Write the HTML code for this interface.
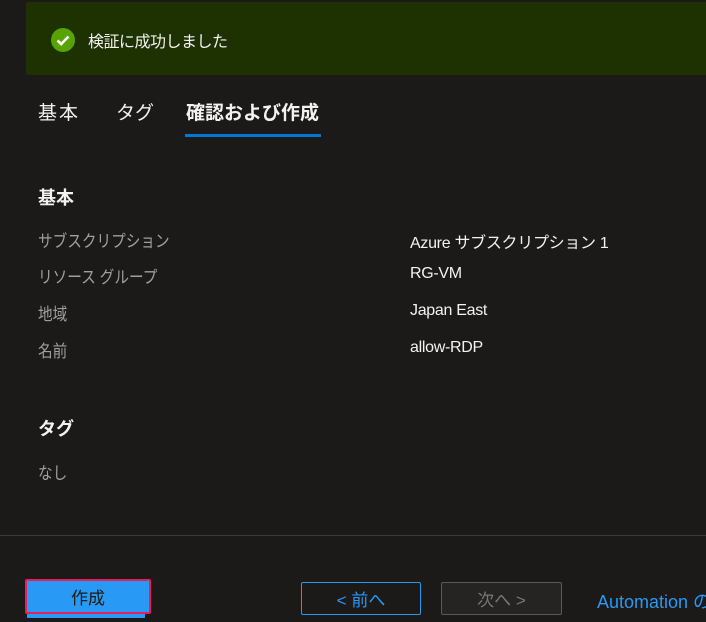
<!DOCTYPE html>
<html><head><meta charset="utf-8"><style>
body{margin:0;width:706px;height:622px;background:#1b1a19;font-family:"Liberation Sans","Noto Sans CJK JP",sans-serif;position:relative;overflow:hidden;color:#f3f2f1}
.a{position:absolute;white-space:nowrap}
.banner{left:26px;top:2px;width:690px;height:73px;background:#1d3200;border-radius:2px}
.lbl{color:#a19f9d;font-size:17px;left:38px;transform:scaleX(0.86);transform-origin:0 0}
.val{color:#f3f2f1;font-size:16px;left:410px;letter-spacing:-0.3px}
.btn{position:absolute;top:582px;height:33px;box-sizing:border-box;font-size:17px;display:flex;align-items:center;justify-content:center;border-radius:2px}
</style></head><body>
<div class="a banner"></div>
<svg class="a" style="left:51px;top:28px" width="24" height="24" viewBox="0 0 24 24"><circle cx="12" cy="12" r="12" fill="#57a300"/><path d="M6.5 12.5l3.7 3.5 7.3-7.5" stroke="#fff" stroke-width="2.6" fill="none"/></svg>
<div class="a" style="left:88px;top:28px;font-size:16px;color:#f3f2f1;letter-spacing:-0.5px">検証に成功しました</div>
<div class="a" style="left:38px;top:98px;font-size:19px;color:#f3f2f1;letter-spacing:2px">基本</div>
<div class="a" style="left:116px;top:98px;font-size:19px;color:#f3f2f1">タグ</div>
<div class="a" style="left:186px;top:98px;font-size:19px;font-weight:bold;color:#f3f2f1">確認および作成</div>
<div class="a" style="left:185px;top:134px;width:136px;height:3px;background:#0078d4"></div>
<div class="a" style="left:38px;top:184px;font-size:18px;font-weight:bold">基本</div>
<div class="a lbl" style="top:227px">サブスクリプション</div><div class="a val" style="top:229px">Azure サブスクリプション 1</div>
<div class="a lbl" style="top:263px">リソース グループ</div><div class="a val" style="top:265px">RG-VM</div>
<div class="a lbl" style="top:300px">地域</div><div class="a val" style="top:302px">Japan East</div>
<div class="a lbl" style="top:337px">名前</div><div class="a val" style="top:339px">allow-RDP</div>
<div class="a" style="left:38px;top:415px;font-size:18px;font-weight:bold">タグ</div>
<div class="a lbl" style="top:459px">なし</div>
<div class="a" style="left:0;top:535px;width:706px;height:1px;background:#3b3a39"></div>
<div class="a" style="left:27px;top:583px;width:118px;height:35px;background:#2899f5"></div>
<div class="btn" style="left:25px;top:579px;width:126px;height:35px;border:2px solid #e81e5b;background:#2899f5;color:#1b1a19">作成</div>
<div class="btn" style="left:301px;width:120px;border:1px solid #2899f5;color:#2899f5">&lt; 前へ</div>
<div class="btn" style="left:441px;width:121px;border:1px solid #5a5958;background:#252423;color:#797775">次へ &gt;</div>
<div class="a" style="left:597px;top:588px;font-size:18px;color:#2899f5">Automation の</div>
</body></html>
